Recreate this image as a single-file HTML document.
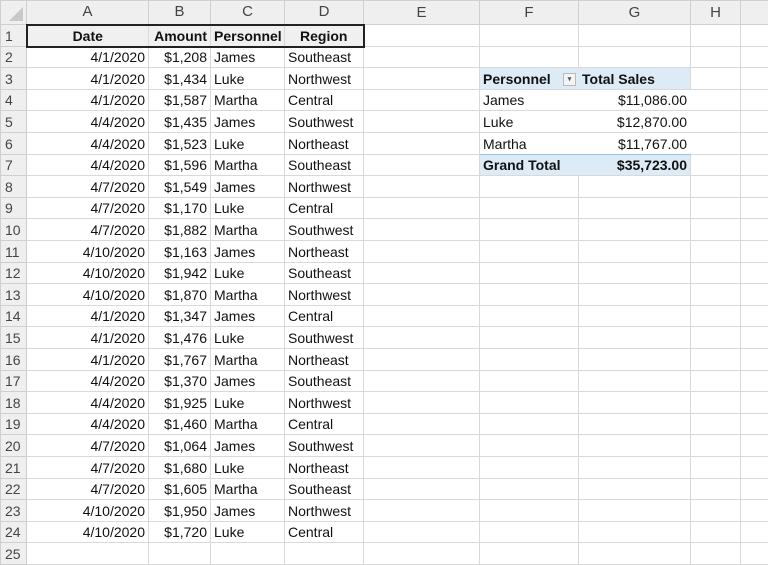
<!DOCTYPE html>
<html><head><meta charset="utf-8">
<style>
html,body{margin:0;padding:0;background:#fff;width:768px;height:564px;overflow:hidden}
table{border-collapse:collapse;table-layout:fixed;width:780px;font-family:"Liberation Sans",sans-serif;font-size:14px;color:#111;position:absolute;left:0;top:0}
tr{height:21px}
tr.t{height:22px}
td{border:1px solid #d9d9d9;padding:0 3px;white-space:nowrap;overflow:hidden;line-height:18px;box-sizing:border-box}
tr.h{height:24px}
tr.h td{background:#efefef;color:#444;text-align:center;border-color:#cfcfcf;font-size:15px}
td.rh{background:#efefef;color:#444;text-align:left;padding-left:4px;border-color:#cfcfcf}
.r{text-align:right}
.c{text-align:center}
tr.one td.d{background:#f0f0f0;font-weight:bold}
.pb{background:#ddebf7;font-weight:bold}
.pw{border-left-color:#fff;border-right-color:#fff}
</style></head><body>
<table>
<colgroup><col style="width:26px"><col style="width:122px"><col style="width:62px"><col style="width:74px"><col style="width:79px"><col style="width:116px"><col style="width:99px"><col style="width:112px"><col style="width:50px"><col style="width:40px"></colgroup>
<tr class="h"><td style="position:relative"><svg width="14" height="14" style="position:absolute;right:3px;bottom:3px"><polygon points="14,0 14,14 0,14" fill="#c8c8c8"/></svg></td><td>A</td><td>B</td><td>C</td><td>D</td><td>E</td><td>F</td><td>G</td><td>H</td><td></td></tr>
<tr class="one t"><td class="rh">1</td><td class="d c" style="border-top:2px solid #222;border-left:2px solid #222;border-bottom:2px solid #222">Date</td><td class="d r" style="border-top:2px solid #222;border-bottom:2px solid #222">Amount</td><td class="d" style="border-top:2px solid #222;border-bottom:2px solid #222">Personnel</td><td class="d c" style="border-top:2px solid #222;border-bottom:2px solid #222;border-right:2px solid #222">Region</td><td></td><td></td><td></td><td></td><td></td></tr>
<tr><td class="rh">2</td><td class="r">4/1/2020</td><td class="r">$1,208</td><td>James</td><td>Southeast</td><td></td><td></td><td></td><td></td><td></td></tr>
<tr class="t"><td class="rh">3</td><td class="r">4/1/2020</td><td class="r">$1,434</td><td>Luke</td><td>Northwest</td><td></td><td class="pb" style="position:relative;border-right-color:#ddebf7">Personnel<span style="position:absolute;right:2px;top:5px;width:11px;height:11px;border:1px solid #bbb;background:#f4f4f4;font-size:7px;line-height:11px;text-align:center;color:#555">▾</span></td><td class="pb">Total Sales</td><td></td><td></td></tr>
<tr><td class="rh">4</td><td class="r">4/1/2020</td><td class="r">$1,587</td><td>Martha</td><td>Central</td><td></td><td class="pw">James</td><td class="r pw">$11,086.00</td><td></td><td></td></tr>
<tr class="t"><td class="rh">5</td><td class="r">4/4/2020</td><td class="r">$1,435</td><td>James</td><td>Southwest</td><td></td><td class="pw">Luke</td><td class="r pw">$12,870.00</td><td></td><td></td></tr>
<tr class="t"><td class="rh">6</td><td class="r">4/4/2020</td><td class="r">$1,523</td><td>Luke</td><td>Northeast</td><td></td><td class="pw" style="border-bottom-color:#9bc2e6">Martha</td><td class="r pw" style="border-bottom-color:#9bc2e6">$11,767.00</td><td></td><td></td></tr>
<tr><td class="rh">7</td><td class="r">4/4/2020</td><td class="r">$1,596</td><td>Martha</td><td>Southeast</td><td></td><td class="pb" style="border-right-color:#ddebf7">Grand Total</td><td class="pb r">$35,723.00</td><td></td><td></td></tr>
<tr class="t"><td class="rh">8</td><td class="r">4/7/2020</td><td class="r">$1,549</td><td>James</td><td>Northwest</td><td></td><td></td><td></td><td></td><td></td></tr>
<tr><td class="rh">9</td><td class="r">4/7/2020</td><td class="r">$1,170</td><td>Luke</td><td>Central</td><td></td><td></td><td></td><td></td><td></td></tr>
<tr class="t"><td class="rh">10</td><td class="r">4/7/2020</td><td class="r">$1,882</td><td>Martha</td><td>Southwest</td><td></td><td></td><td></td><td></td><td></td></tr>
<tr class="t"><td class="rh">11</td><td class="r">4/10/2020</td><td class="r">$1,163</td><td>James</td><td>Northeast</td><td></td><td></td><td></td><td></td><td></td></tr>
<tr><td class="rh">12</td><td class="r">4/10/2020</td><td class="r">$1,942</td><td>Luke</td><td>Southeast</td><td></td><td></td><td></td><td></td><td></td></tr>
<tr class="t"><td class="rh">13</td><td class="r">4/10/2020</td><td class="r">$1,870</td><td>Martha</td><td>Northwest</td><td></td><td></td><td></td><td></td><td></td></tr>
<tr><td class="rh">14</td><td class="r">4/1/2020</td><td class="r">$1,347</td><td>James</td><td>Central</td><td></td><td></td><td></td><td></td><td></td></tr>
<tr class="t"><td class="rh">15</td><td class="r">4/1/2020</td><td class="r">$1,476</td><td>Luke</td><td>Southwest</td><td></td><td></td><td></td><td></td><td></td></tr>
<tr class="t"><td class="rh">16</td><td class="r">4/1/2020</td><td class="r">$1,767</td><td>Martha</td><td>Northeast</td><td></td><td></td><td></td><td></td><td></td></tr>
<tr><td class="rh">17</td><td class="r">4/4/2020</td><td class="r">$1,370</td><td>James</td><td>Southeast</td><td></td><td></td><td></td><td></td><td></td></tr>
<tr class="t"><td class="rh">18</td><td class="r">4/4/2020</td><td class="r">$1,925</td><td>Luke</td><td>Northwest</td><td></td><td></td><td></td><td></td><td></td></tr>
<tr><td class="rh">19</td><td class="r">4/4/2020</td><td class="r">$1,460</td><td>Martha</td><td>Central</td><td></td><td></td><td></td><td></td><td></td></tr>
<tr class="t"><td class="rh">20</td><td class="r">4/7/2020</td><td class="r">$1,064</td><td>James</td><td>Southwest</td><td></td><td></td><td></td><td></td><td></td></tr>
<tr class="t"><td class="rh">21</td><td class="r">4/7/2020</td><td class="r">$1,680</td><td>Luke</td><td>Northeast</td><td></td><td></td><td></td><td></td><td></td></tr>
<tr><td class="rh">22</td><td class="r">4/7/2020</td><td class="r">$1,605</td><td>Martha</td><td>Southeast</td><td></td><td></td><td></td><td></td><td></td></tr>
<tr class="t"><td class="rh">23</td><td class="r">4/10/2020</td><td class="r">$1,950</td><td>James</td><td>Northwest</td><td></td><td></td><td></td><td></td><td></td></tr>
<tr><td class="rh">24</td><td class="r">4/10/2020</td><td class="r">$1,720</td><td>Luke</td><td>Central</td><td></td><td></td><td></td><td></td><td></td></tr>
<tr class="t"><td class="rh">25</td><td></td><td></td><td></td><td></td><td></td><td></td><td></td><td></td><td></td></tr>
</table>
</body></html>
